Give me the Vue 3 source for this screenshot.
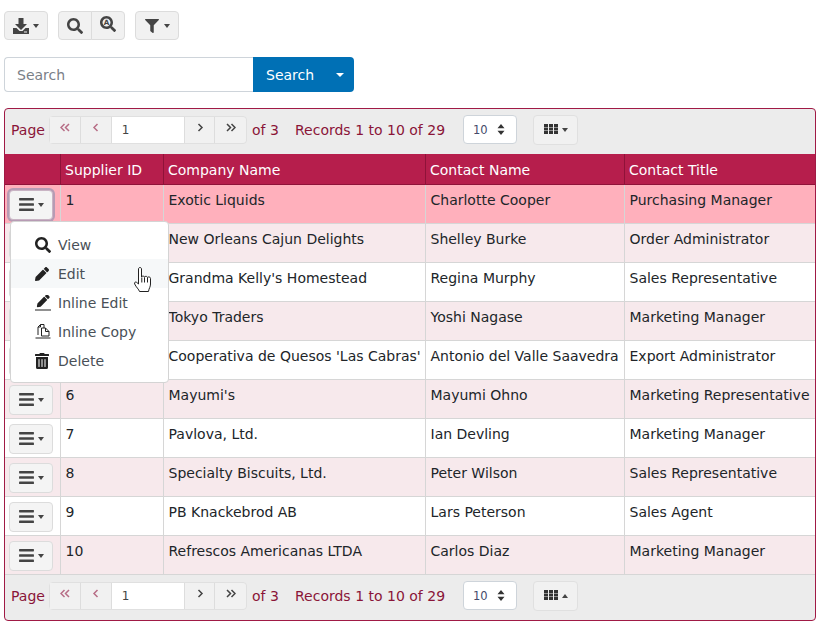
<script setup>
const rows = [
  [1, 'Exotic Liquids', 'Charlotte Cooper', 'Purchasing Manager'],
  [2, 'New Orleans Cajun Delights', 'Shelley Burke', 'Order Administrator'],
  [3, "Grandma Kelly's Homestead", 'Regina Murphy', 'Sales Representative'],
  [4, 'Tokyo Traders', 'Yoshi Nagase', 'Marketing Manager'],
  [5, "Cooperativa de Quesos 'Las Cabras'", 'Antonio del Valle Saavedra', 'Export Administrator'],
  [6, "Mayumi's", 'Mayumi Ohno', 'Marketing Representative'],
  [7, 'Pavlova, Ltd.', 'Ian Devling', 'Marketing Manager'],
  [8, 'Specialty Biscuits, Ltd.', 'Peter Wilson', 'Sales Representative'],
  [9, 'PB Knackebrod AB', 'Lars Peterson', 'Sales Agent'],
  [10, 'Refrescos Americanas LTDA', 'Carlos Diaz', 'Marketing Manager'],
]
const searchD = 'M505 442.7L405.3 343c-4.5-4.5-10.6-7-17-7H372c27.6-35.3 44-79.7 44-128C416 93.1 322.9 0 208 0S0 93.1 0 208s93.1 208 208 208c48.3 0 92.7-16.4 128-44v16.3c0 6.4 2.5 12.5 7 17l99.7 99.7c9.4 9.4 24.6 9.4 33.9 0l28.3-28.3c9.4-9.4 9.4-24.6.1-34zM208 336c-70.7 0-128-57.2-128-128 0-70.7 57.2-128 128-128 70.7 0 128 57.2 128 128 0 70.7-57.2 128-128 128z'
const barsD = 'M16 132h416c8.837 0 16-7.163 16-16V76c0-8.837-7.163-16-16-16H16C7.163 60 0 67.163 0 76v40c0 8.837 7.163 16 16 16zm0 160h416c8.837 0 16-7.163 16-16v-40c0-8.837-7.163-16-16-16H16c-8.837 0-16 7.163-16 16v40c0 8.837 7.163 16 16 16zm0 160h416c8.837 0 16-7.163 16-16v-40c0-8.837-7.163-16-16-16H16c-8.837 0-16 7.163-16 16v40c0 8.837 7.163 16 16 16z'
const pencilD = 'M497.9 142.1l-46.1 46.1c-4.7 4.7-12.3 4.7-17 0l-111-111c-4.7-4.7-4.7-12.3 0-17l46.1-46.1c18.7-18.7 49.1-18.7 67.9 0l60.1 60.1c18.8 18.7 18.8 49.1 0 67.9zM284.2 99.8L21.6 362.4.4 483.9c-2.9 16.4 11.4 30.6 27.8 27.8l121.5-21.3 262.6-262.6c4.7-4.7 4.7-12.3 0-17l-111-111c-4.8-4.7-12.4-4.7-17.1 0z'
const trashD = 'M32 464a48 48 0 0 0 48 48h288a48 48 0 0 0 48-48V128H32zm272-256a16 16 0 0 1 32 0v224a16 16 0 0 1-32 0zm-96 0a16 16 0 0 1 32 0v224a16 16 0 0 1-32 0zm-96 0a16 16 0 0 1 32 0v224a16 16 0 0 1-32 0zM432 32H312l-9.4-18.7A24 24 0 0 0 281.1 0H166.8a23.72 23.72 0 0 0-21.4 13.3L136 32H16A16 16 0 0 0 0 48v32a16 16 0 0 0 16 16h416a16 16 0 0 0 16-16V48a16 16 0 0 0-16-16z'
const filterD = 'M487.976 0H24.028C2.71 0-8.047 25.866 7.058 40.971L192 225.941V432c0 7.831 3.821 15.17 10.237 19.662l80 55.98C298.02 518.69 320 507.493 320 487.98V225.941l184.947-184.97C520.021 25.896 509.338 0 487.976 0z'
const pagers = [{ up: false }, { up: true }]
</script>

<template>
  <div class="page">
    <div class="toolbar">
      <button class="tbtn export">
        <svg class="ic16" viewBox="0 0 16 16"><path d="M5.500 0h5v6H14l-6 6-6-6h3.500z" /><path d="M0 10h3.500L6.500 13h3l3-3H16v6H0zM11 13.500v1h3v-1z" fill-rule="evenodd" /></svg>
        <i class="caret"></i>
      </button>
      <div class="group">
        <button class="tbtn sq">
          <svg class="ic16" viewBox="0 0 512 512"><path :d="searchD" /></svg>
        </button>
        <button class="tbtn sq second">
          <svg class="ic16 up" viewBox="0 0 512 512"><path :d="searchD" /><text x="208" y="295" text-anchor="middle" class="a">A</text></svg>
        </button>
      </div>
      <button class="tbtn export">
        <svg class="ic14" viewBox="0 0 512 512"><path :d="filterD" /></svg>
        <i class="caret"></i>
      </button>
    </div>

    <form class="search" @submit.prevent>
      <input class="search-input" placeholder="Search" />
      <button class="search-btn">Search<i class="caret white"></i></button>
    </form>

    <div class="panel">
      <template v-for="(p, pi) in pagers" :key="pi">
        <div class="pager" :class="{ bottom: p.up }">
          <span class="lbl">Page</span>
          <div class="pgroup">
            <button class="pbtn off"><svg viewBox="0 0 10 10"><path d="M4.500 1 1 4.500 4.500 8M9 1 5.500 4.500 9 8" /></svg></button>
            <button class="pbtn off"><svg viewBox="0 0 10 10"><path d="M6.500 1 3 4.500 6.500 8" /></svg></button>
            <span class="pinput">1</span>
            <button class="pbtn"><svg viewBox="0 0 10 10"><path d="M3.500 1 7 4.500 3.500 8" /></svg></button>
            <button class="pbtn"><svg viewBox="0 0 10 10"><path d="M1 1l3.500 3.500L1 8M5.500 1 9 4.500 5.500 8" /></svg></button>
          </div>
          <span class="of">of 3</span>
          <span class="rec">Records <b>1</b> to <b>10</b> of <b>29</b></span>
          <span class="sizer">10<svg viewBox="0 0 8 11"><path d="M4 0l3.500 4.200h-7zM4 11 .5 6.800h7z" /></svg></span>
          <button class="colbtn">
            <svg viewBox="0 0 14 10"><path d="M0 0h4v3H0zM5 0h4v3H5zM10 0h4v3h-4zM0 3.500h4v3H0zM5 3.500h4v3H5zM10 3.500h4v3h-4zM0 7h4v3H0zM5 7h4v3H5zM10 7h4v3h-4z" /></svg>
            <i class="caret" :class="{ flip: p.up }"></i>
          </button>
        </div>

        <div v-if="pi === 0" class="tablewrap">
          <table class="grid">
            <colgroup><col class="c0" /><col class="c1" /><col class="c2" /><col class="c3" /><col class="c4" /></colgroup>
            <thead>
              <tr><th></th><th>Supplier ID</th><th>Company Name</th><th>Contact Name</th><th>Contact Title</th></tr>
            </thead>
            <tbody>
              <tr v-for="(r, i) in rows" :key="r[0]" :class="{ sel: i === 0, alt: i % 2 === 1 }">
                <td class="act">
                  <button class="rowbtn" :class="{ focus: i === 0 }">
                    <svg viewBox="0 0 448 512"><path :d="barsD" /></svg><i class="caret"></i>
                  </button>
                </td>
                <td>{{ r[0] }}</td><td>{{ r[1] }}</td><td>{{ r[2] }}</td><td>{{ r[3] }}</td>
              </tr>
            </tbody>
          </table>

          <ul class="menu">
            <li><svg class="mi" viewBox="0 0 512 512"><path :d="searchD" /></svg>View</li>
            <li class="hover"><svg class="mi small" viewBox="0 0 512 512"><path :d="pencilD" /></svg>Edit</li>
            <li><svg class="mi" viewBox="0 0 512 512"><path transform="translate(60 -20) scale(.8)" :d="pencilD" /><path d="M0 464h512v32H0z" /></svg>Inline Edit</li>
            <li>
              <svg class="mi copy" viewBox="0 0 16 16"><path d="M3 11V3l2.500-2.500H9V4M6.500 4H10.500L14 7.500V12H6.500zM10.500 4v3.500H14M5.500.5V3H3M.5 14h15" /></svg>Inline Copy
            </li>
            <li><svg class="mi" viewBox="0 0 448 512" preserveAspectRatio="xMinYMid"><path :d="trashD" /></svg>Delete</li>
          </ul>
          <svg class="hand" viewBox="0 0 18 26"><path d="M4.500 2c0-2 3-2 3 0v8c0-1.200 3-1.200 3 .2 0-1.200 3-1.200 3 .4 0-1 3-1 3 .8V17c0 3-1.500 4-2 7.500H5.500c-.5-2-3.500-4.500-4.800-7.500-.7-1.600.8-2.600 2-1.600L4.500 17z" /><path d="M7.800 10.500v5M10.500 10.500v5M13.500 11v4.500" /></svg>
        </div>
      </template>
    </div>
  </div>
</template>

<style scoped>
.page { width: 820px; height: 625px; box-sizing: border-box; padding: 11px 4px 0; font-family: "DejaVu Sans", sans-serif; font-size: 14px; color: #212529; overflow: hidden; }
button { font: inherit; padding: 0; cursor: pointer; }
svg { display: block; fill: currentColor; }
.caret { display: inline-block; width: 0; height: 0; border-left: 3.5px solid transparent; border-right: 3.5px solid transparent; border-top: 4px solid #444; }
.caret.flip { border-top: 0; border-bottom: 4px solid #444; }
.caret.white { border-top-color: #fff; border-left-width: 4px; border-right-width: 4px; margin-left: 22px; }

.toolbar { display: flex; gap: 10px; height: 30px; }
.group { display: flex; }
.tbtn { height: 29px; background: #f1f1f1; border: 1px solid #dcdcdc; border-radius: 4px; color: #444; display: flex; align-items: center; justify-content: center; box-sizing: border-box; }
.export { width: 44px; gap: 4px; }
.sq { width: 34px; border-radius: 4px 0 0 4px; }
.second { border-left: 1px solid #dcdcdc; border-radius: 0 4px 4px 0; margin-left: -1px; width: 34px; }
.ic16 { width: 16px; height: 16px; }
.ic14 { width: 14px; height: 14px; margin-right: 1px; }
.up { margin-top: -3px; }
.a { font-size: 230px; font-weight: 700; font-family: "DejaVu Sans", sans-serif; }

.search { display: flex; margin-top: 16px; height: 35px; width: 350px; }
.search-input { width: 249px; box-sizing: border-box; border: 1px solid #ced4da; border-right: 0; border-radius: 4px 0 0 4px; padding: 0 12px; font: inherit; font-size: 14px; outline: 0; background: #fff; }
.search-input::placeholder { color: #7a8087; opacity: 1; }
.search-btn { width: 101px; background: #0070b5; color: #fff; border: 0; border-radius: 0 4px 4px 0; font-size: 14px; display: flex; align-items: center; padding-left: 13px; box-sizing: border-box; }

.panel { margin-top: 16px; width: 812px; height: 513px; box-sizing: border-box; border: 1px solid #a01a45; border-radius: 4px; background: #ececec; }
.pager { display: flex; align-items: center; height: 45px; padding: 0 0 4px 6px; box-sizing: border-box; color: #8a1538; }
.pager.bottom { height: 45px; padding-bottom: 4px; }
.lbl { width: 38px; }
.pgroup { display: flex; height: 28px; border: 1px solid #e0e0e0; border-radius: 4px; box-sizing: border-box; width: 198px; }
.pbtn { width: 31px; background: #f1f1f1; border: 0; border-right: 1px solid #ddd; display: flex; align-items: center; justify-content: center; color: #444; padding-bottom: 3px; }
.pbtn:nth-last-child(1) { border-right: 0; border-radius: 0 4px 4px 0; }
.pbtn:nth-last-child(2) { border-left: 1px solid #ddd; }
.pbtn svg { width: 10px; height: 10px; fill: none; stroke: currentColor; stroke-width: 1.5; }
.off { color: #b76d86; }
.pinput { width: 73px; background: #fff; color: #444; font-size: 12px; line-height: 26px; padding-left: 10px; box-sizing: border-box; }
.of { margin-left: 5px; width: 43px; }
.rec { width: 168px; white-space: nowrap; }
.rec b { font-weight: 400; color: #8a1538; }
.sizer { width: 54px; height: 29px; box-sizing: border-box; background: #fff; border: 1px solid #ced4da; border-radius: 4px; color: #444a6a; font-size: 11.5px; display: flex; align-items: center; padding-left: 9px; gap: 9px; }
.sizer svg { width: 8px; height: 11px; color: #333; }
.colbtn { margin-left: 16px; width: 45px; height: 30px; background: #f1f1f1; border: 1px solid #e0e0e0; border-radius: 4px; display: flex; align-items: center; justify-content: center; gap: 4px; color: #333; }
.colbtn svg { width: 14px; height: 10px; margin-top: -2px; }

.tablewrap { position: relative; }
.grid { width: 810px; border-collapse: separate; border-spacing: 0; table-layout: fixed; }
.c0 { width: 55px; } .c1 { width: 103px; } .c2 { width: 262px; } .c3 { width: 199px; } .c4 { width: 191px; }
th { height: 31px; background: #b61e4c; color: #fff; font-weight: 400; text-align: left; padding: 2px 5px 0 4px; box-sizing: border-box; border-left: 1px solid #8f1239; border-bottom: 1px solid #8f1239; }
th:first-child { border-left: 0; }
td { height: 39px; padding: 7px 5px 0 4.5px; box-sizing: border-box; vertical-align: top; background: #fff; border-left: 1px solid #d6d6d6; border-bottom: 1px solid #d6d6d6; white-space: nowrap; overflow: hidden; }
td:first-child { border-left: 0; }
tr.alt td { background: #f7e9ec; }
tr.sel td { background: #ffb0bc; }
.act { padding: 5px 0 0 4px; overflow: visible; }
.rowbtn { width: 44px; height: 29.5px; background: #f4f4f4; border: 1px solid #dcdcdc; border-radius: 4px; display: flex; align-items: center; justify-content: center; gap: 4px; color: #444; box-sizing: border-box; }
.rowbtn svg { width: 15px; height: 17px; }
.rowbtn.focus { box-shadow: 0 0 0 2px #b79bb4; border-color: #c9b4c4; }

.menu { position: absolute; left: 5px; top: 67px; width: 159px; height: 162px; box-sizing: border-box; margin: 0; padding: 8px 0; list-style: none; background: #fff; border: 1px solid #d4d4d4; border-radius: 4px; color: #495057; z-index: 2; }
.menu li { display: flex; align-items: center; height: 29px; padding-left: 24px; gap: 7px; box-sizing: border-box; }
.menu li svg { flex: none; color: #222; }
.mi { width: 16px; height: 16px; }
.mi.small { width: 14px; height: 14px; margin-right: 2px; }
.menu .copy { fill: none; stroke: #222; stroke-width: 1; }
.menu li.hover { background: #f6f8f9; }
.hand { position: absolute; left: 129px; top: 113px; width: 18px; height: 26px; fill: #fff; stroke: #222; stroke-width: 1; z-index: 3; }
</style>
